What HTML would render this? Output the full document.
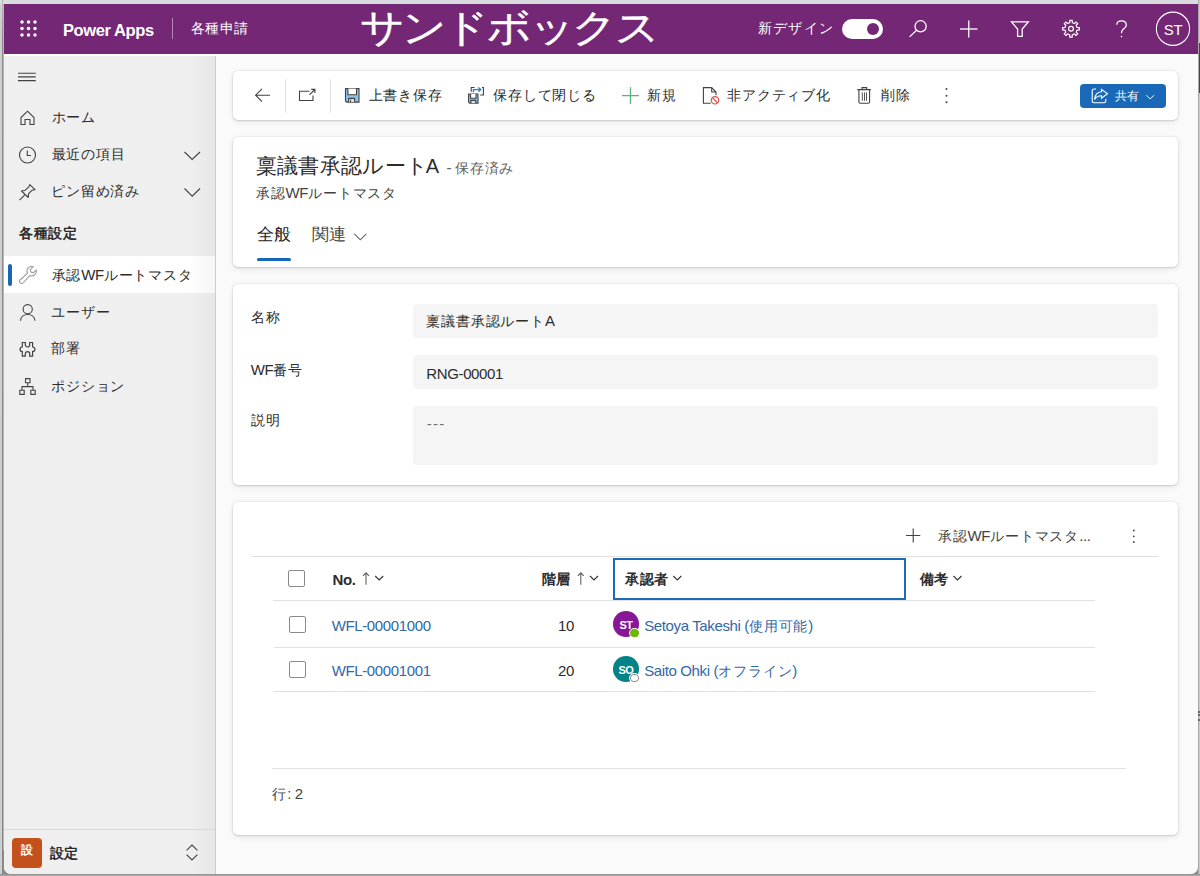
<!DOCTYPE html>
<html lang="ja">
<head>
<meta charset="utf-8">
<style>
*{box-sizing:border-box;margin:0;padding:0}
html,body{width:1200px;height:876px;overflow:hidden;background:#cfcfcf;font-family:"Liberation Sans",sans-serif;color:#2c2c2c}
.a{position:absolute;white-space:nowrap;line-height:1}
svg{position:absolute;overflow:visible}
#ftop{position:absolute;left:0;top:0;width:1200px;height:4px;background:#dadbdf}
#fl2{position:absolute;left:2px;top:0;width:1px;height:876px;background:linear-gradient(#b5b5b5 0,#b5b5b5 4px,#8a8a8a 40px,#858585 100%)}
#fl3{position:absolute;left:3px;top:4px;width:1px;height:872px;background:#b8b8b8}
#fr1{position:absolute;left:1198px;top:0;width:1px;height:876px;background:#a8a8a8}
#fr2{position:absolute;left:1199px;top:0;width:1px;height:876px;background:#cbcbcb}
#fb1{position:absolute;left:0;top:874px;width:1200px;height:1px;background:#969696}
#fb2{position:absolute;left:0;top:875px;width:1200px;height:1px;background:#a8a8a8}
#wbg{position:absolute;left:3px;top:850px;width:1195px;height:24px;background:#8a8a8a}
#win{position:absolute;left:4px;top:4px;width:1194px;height:870px;background:#fafafa;border-radius:0 0 7px 7px}
#hdr{position:absolute;left:4px;top:4px;width:1194px;height:50.3px;background:#742774}
#side{position:absolute;left:4px;top:56px;width:212px;height:818px;background:linear-gradient(to right,#efefef 0,#efefef 186px,#e6e6e6 211px);border-right:1px solid #cdcdcd;border-radius:0 0 0 7px}
#hwl{position:absolute;left:4px;top:54.3px;width:1194px;height:1.7px;background:#fff}
.card{position:absolute;left:232.5px;width:945px;background:#fff;border-radius:5px;box-shadow:0 0 2px rgba(0,0,0,.12),0 1px 2px rgba(0,0,0,.12),0 2px 7px rgba(0,0,0,.07)}
.w{color:#fff}
.sb{top:7.6px;font-size:39px;transform:scaleX(1.12);transform-origin:0 0;-webkit-text-stroke:.35px #fff}
.dot{position:absolute;width:3.4px;height:3.4px;border-radius:50%;background:#fff}
.f14{font-size:14.2px;letter-spacing:.85px}
.L{font-size:15px;letter-spacing:-.37px}
.b{font-weight:bold}
.g{color:#616161}
.lk{color:#3268a6}
.inp{position:absolute;left:412.5px;width:745px;background:#f5f5f5;border-radius:4px}
.cb{position:absolute;width:17px;height:17px;border:1px solid #8a8a8a;border-radius:2px;background:#fff}
.hl{position:absolute;height:1px;background:#e0e0e0}
</style>
</head>
<body>
<div id="ftop"></div>
<div id="fl2"></div><div id="fl3"></div><div id="fr1"></div><div id="fr2"></div><div id="fb1"></div><div id="fb2"></div>
<div style="position:absolute;left:1199px;top:43px;width:1px;height:50px;background:#742774"></div>
<div id="wbg"></div>
<div style="position:absolute;left:1198px;top:711px;width:2px;height:2px;background:#6a6a6a"></div><div style="position:absolute;left:1198px;top:714px;width:2px;height:1.5px;background:#6a6a6a"></div><div style="position:absolute;left:1198px;top:719px;width:2px;height:2px;background:#6a6a6a"></div>
<div id="win"></div>
<div id="hdr"></div><div id="hwl"></div>

<!-- ========== header content ========== -->
<svg style="left:0;top:0" width="60" height="60" fill="#fff"><circle cx="22" cy="22" r="1.75"/><circle cx="28.5" cy="22" r="1.75"/><circle cx="35" cy="22" r="1.75"/><circle cx="22" cy="28.5" r="1.75"/><circle cx="28.5" cy="28.5" r="1.75"/><circle cx="35" cy="28.5" r="1.75"/><circle cx="22" cy="35" r="1.75"/><circle cx="28.5" cy="35" r="1.75"/><circle cx="35" cy="35" r="1.75"/></svg>
<div class="a w b" style="left:63px;top:22.3px;font-size:16.5px;letter-spacing:-.4px">Power Apps</div>
<div style="position:absolute;left:171.5px;top:18px;width:1px;height:21px;background:rgba(255,255,255,.45)"></div>
<div class="a w" style="left:190.5px;top:21.3px;font-size:14px;letter-spacing:.6px">各種申請</div>
<div class="a w sb" style="left:359.72px">サ</div><div class="a w sb" style="left:401.79px">ン</div><div class="a w sb" style="left:443.52px">ド</div><div class="a w sb" style="left:486.62px">ボ</div><div class="a w sb" style="left:529.86px">ッ</div><div class="a w sb" style="left:572.43px">ク</div><div class="a w sb" style="left:614.88px">ス</div>
<div class="a w f14" style="left:758px;top:21px;letter-spacing:1.2px">新デザイン</div>
<div style="position:absolute;left:842px;top:19px;width:41px;height:20px;border-radius:10px;background:#fff"></div>
<div style="position:absolute;left:867px;top:23px;width:12px;height:12px;border-radius:50%;background:#742774"></div>
<svg style="left:0;top:0" width="1200" height="60" fill="none" stroke="#fff" stroke-width="1.3">
  <circle cx="920.6" cy="26.3" r="5.6"/>
  <line x1="916.6" y1="30.3" x2="909.6" y2="36.9"/>
  <line x1="960" y1="29" x2="977.5" y2="29"/>
  <line x1="968.75" y1="20.6" x2="968.75" y2="37.5"/>
  <path d="M1011.5 21.8 H1028.3 L1022.2 29 V36.4 H1017.6 V29 Z"/>
  <path stroke-width="1.2" d="M1077.06 27.46 L1079.32 27.58 L1079.32 29.92 L1077.06 30.04 L1076.20 32.13 L1077.71 33.81 L1076.06 35.46 L1074.38 33.95 L1072.29 34.81 L1072.17 37.07 L1069.83 37.07 L1069.71 34.81 L1067.62 33.95 L1065.94 35.46 L1064.29 33.81 L1065.80 32.13 L1064.94 30.04 L1062.68 29.92 L1062.68 27.58 L1064.94 27.46 L1065.80 25.37 L1064.29 23.69 L1065.94 22.04 L1067.62 23.55 L1069.71 22.69 L1069.83 20.43 L1072.17 20.43 L1072.29 22.69 L1074.38 23.55 L1076.06 22.04 L1077.71 23.69 L1076.20 25.37Z"/>
  <circle cx="1071" cy="28.75" r="2.4" stroke-width="1.2"/>
  <path stroke-width="1.3" d="M1116.8 24.8 C1116.8 22.3 1118.7 20.9 1121.5 20.9 C1124.4 20.9 1126.3 22.7 1126.3 25.1 C1126.3 27.6 1124.3 28.5 1122.8 29.7 C1121.7 30.6 1121.5 31.5 1121.5 33.3"/>
  <circle cx="1121.5" cy="36.6" r="0.8" fill="#fff" stroke="none"/>
  <circle cx="1173" cy="28.75" r="16.6" stroke-width="1.1"/>
</svg>
<div class="a w" style="left:1163.7px;top:21.8px;font-size:15px;letter-spacing:-.3px">ST</div>

<!-- ========== sidebar ========== -->
<div id="side"></div>
<div style="position:absolute;left:4px;top:255.5px;width:211px;height:37.5px;background:linear-gradient(to right,#fff 0,#fff 186px,#f5f5f5 211px)"></div>
<div style="position:absolute;left:8px;top:264px;width:4px;height:22px;border-radius:2px;background:#1767b9"></div>
<div class="hl" style="left:4px;top:829px;width:211px;background:#d9d9d9"></div>
<div class="a f14" style="left:51.5px;top:109.8px">ホーム</div>
<div class="a f14" style="left:51.5px;top:147.3px">最近の項目</div>
<div class="a f14" style="left:51px;top:184px">ピン留め済み</div>
<div class="a f14 b" style="left:19px;top:225.8px;letter-spacing:.7px">各種設定</div>
<div class="a f14" style="left:51.5px;top:267px">承認<span class="L">WF</span>ルートマスタ</div>
<div class="a f14" style="left:51px;top:304.9px">ユーザー</div>
<div class="a f14" style="left:51px;top:341.3px">部署</div>
<div class="a f14" style="left:51px;top:378.9px">ポジション</div>
<div style="position:absolute;left:12px;top:838px;width:30px;height:30px;border-radius:4px;background:#c4501c"></div>
<div class="a w b" style="left:21px;top:845px;font-size:11.5px">設</div>
<div class="a f14 b" style="left:50px;top:846px;letter-spacing:0">設定</div>
<svg style="left:0;top:0" width="220" height="876" fill="none" stroke="#424242" stroke-width="1.1">
  <path d="M18 73.2H35.8 M18 76.9H35.8 M18 80.6H35.8"/>
  <path d="M21 124.5V117.6L27.5 111.2L34 117.6V124.5H30V119.5H25V124.5Z"/>
  <circle cx="27.5" cy="155" r="8"/>
  <path d="M27.3 150.5V155.5H31"/>
  <path d="M184.5 152L192.2 159.5L200 152 M184.5 188.5L192.2 196.2L200 188.5"/>
  <path d="M19.5 200.2L24.6 195.1"/><path stroke-linejoin="round" d="M29.8 184.6L35 189.6L32 190.3L28.6 193.6L28.2 197.5L21.5 191L25.3 190.2L28.9 186.8Z"/>
  <path stroke="#9a9a9a" transform="translate(0 .8)" d="M19.8 281.5C19.2 280.8 19.3 279.8 20 279.2L27.4 272.5C26.6 270.6 27 268.3 28.6 266.9C29.9 265.8 31.6 265.5 33.1 266L30.2 268.9L31 271.2L33.3 272L36.2 269.1C36.7 270.6 36.4 272.4 35.2 273.6C33.8 275.1 31.6 275.6 29.7 274.8L23 282.2C22.4 282.9 21.3 282.9 20.7 282.3Z"/>
  <circle cx="27.7" cy="309.2" r="4.6"/>
  <path d="M20.5 320.8C20.8 317 23.8 314.5 27.7 314.5C31.6 314.5 34.6 317 35 320.8"/>
  <path stroke-width="1.2" d="M22.3 342.5H25.3V344.8A2.2 2.2 0 0 0 29.7 344.8V342.5H32.6V347A2.3 2.3 0 0 1 32.6 351.6V356.1H29.7V353.8A2.2 2.2 0 0 0 25.3 353.8V356.1H22.3V351.6A2.3 2.3 0 0 1 22.3 347Z"/>
  <path d="M25.5 378.6H30V382.8H25.5Z M19.8 390.2H24.2V394.4H19.8Z M30.8 390.2H35.2V394.4H30.8Z M27.75 382.8V386.6 M22 390.2V386.6H33V390.2"/>
  <path d="M186.6 850.4L192 845L197.4 850.4 M186.6 854.6L192 860L197.4 854.6"/>
</svg>

<!-- ========== cards ========== -->
<div class="card" style="top:71px;height:49px"></div>
<div class="card" style="top:137px;height:130px"></div>
<div class="card" style="top:284px;height:201px"></div>
<div class="card" style="top:501.6px;height:333.4px"></div>

<!-- command bar -->
<div class="hl" style="left:285px;top:79px;width:1px;height:33.5px;background:#e0e0e0"></div>
<div class="hl" style="left:330px;top:79px;width:1px;height:33.5px;background:#e0e0e0"></div>
<div class="a f14" style="left:368.5px;top:88.3px">上書き保存</div>
<div class="a f14" style="left:493px;top:88px">保存して閉じる</div>
<div class="a f14" style="left:647px;top:87.7px">新規</div>
<div class="a f14" style="left:727px;top:87.9px">非アクティブ化</div>
<div class="a f14" style="left:881px;top:87.8px">削除</div>
<div style="position:absolute;left:1079.5px;top:83.5px;width:86.5px;height:24.5px;border-radius:4px;background:#1a69b8"></div>
<div class="a w" style="left:1114.6px;top:90px;font-size:12.2px;letter-spacing:.3px">共有</div>
<svg style="left:0;top:0" width="1200" height="130" fill="none" stroke="#424242" stroke-width="1.1">
  <path d="M262 88.8L255.6 95.2L262 101.6 M255.6 95.2H270"/>
  <path d="M309.5 91.2H299.5V100.5H313V95.5 M309.5 94.8L314.8 89.5 M311.2 89.4H314.9V93.1"/>
  <path fill="#8cc4f0" d="M345.5 88.6H359V102.1H346.6L345.5 101Z"/>
  <path fill="#fff" d="M347.9 88.6V94.7H356.5V88.6"/>
  <path fill="#e2e2e2" d="M348.6 102.1V98.4H354.6V102.1"/>
  <path stroke-width="1" d="M350.6 99.6V102"/>
  <path fill="#8cc4f0" d="M468.6 94H478V103.1H469.6L468.6 102.1Z"/>
  <path fill="#fff" d="M470.6 94V98.2H476V94"/>
  <path fill="#e2e2e2" d="M470.9 103.1V100.4H475.7V103.1"/>
  <path d="M471.2 91.8V87.5H474.6 M482 87.5H483.4V95H480.2"/>
  <path stroke="#2f7bd1" stroke-width="1.3" d="M473.4 92.2V89.6H480.6 M478.4 87.4L480.8 89.6L478.4 91.8"/>
  <path stroke="#56b476" stroke-width="1.3" d="M622 95.6H639 M630.5 87.3V104"/>
  <path d="M711.7 87.6H703.4V103.3H710.8 M711.7 87.6L716 92V95.2 M711.7 87.6V92H716"/>
  <circle cx="715" cy="100.3" r="3.7" fill="#fff" stroke="#e64a4a" stroke-width="1.2"/>
  <path stroke="#e64a4a" stroke-width="1.3" d="M712.6 97.9L717.4 102.7"/>
  <path d="M857.3 89.6H870.8 M862 89.6V87.6H866.7V89.6 M858.9 89.6V102.1Q858.9 103.2 860.1 103.2H868.3Q869.6 103.2 869.6 102.1V89.6"/><path stroke-width=".9" d="M862.3 92.4V100.8 M864.5 92.4V100.8 M866.5 92.4V100.8"/>
  <circle cx="946.5" cy="89" r="1" fill="#424242" stroke="none"/>
  <circle cx="946.5" cy="95.7" r="1" fill="#424242" stroke="none"/>
  <circle cx="946.5" cy="102.3" r="1" fill="#424242" stroke="none"/>
  <path stroke="#fff" d="M1096 89H1094Q1092.2 89 1092.2 90.8V101Q1092.2 102.7 1094 102.7H1104Q1105.8 102.7 1105.8 101V99 M1101.5 89.4L1107.5 93.8L1101.5 98.2V95.8C1098 95.8 1096 97 1094.5 99.5C1095 95 1097.5 92 1101.5 91.8Z"/>
  <path stroke="#fff" stroke-width=".95" d="M1146.4 95.2L1150.2 99L1154 95.2"/>
</svg>

<!-- header card -->
<div class="a" style="left:255.5px;top:154.5px;font-size:21px;letter-spacing:.4px">稟議書承認ルート<span style="margin-left:-3px;font-size:20px">A</span></div>
<div class="a f14 g" style="left:446.5px;top:160.3px"><span class="L">- </span>保存済み</div>
<div class="a f14" style="left:255.8px;top:184.5px;color:#424242">承認<span class="L">WF</span>ルートマスタ</div>
<div class="a" style="left:257px;top:226.5px;font-size:16.6px;color:#242424">全般</div>
<div class="a" style="left:312px;top:226.5px;font-size:16.6px;color:#424242">関連</div>
<div style="position:absolute;left:256.5px;top:258px;width:34px;height:3px;border-radius:1.5px;background:#1767b9"></div>
<svg style="left:0;top:0" width="400" height="260" fill="none" stroke="#616161" stroke-width="1.1">
  <path d="M354.3 233.8L360.3 239.8L366.3 233.8"/>
</svg>

<!-- fields card -->
<div class="a f14" style="left:251.2px;top:309.9px">名称</div>
<div class="a f14" style="left:250.8px;top:361.6px"><span class="L">WF</span>番号</div>
<div class="a f14" style="left:251px;top:412.5px">説明</div>
<div class="inp" style="top:304px;height:34px"></div>
<div class="inp" style="top:355px;height:34px"></div>
<div class="inp" style="top:406px;height:59px"></div>
<div class="a f14" style="left:426.2px;top:312.9px">稟議書承認ルート<span class="L">A</span></div>
<div class="a L" style="left:426.3px;top:365.9px">RNG-00001</div>
<div class="a L" style="left:426.8px;top:416px;color:#707070;letter-spacing:1.2px">---</div>

<!-- grid card -->
<div class="a f14" style="left:937.8px;top:527.6px;color:#424242">承認<span class="L">WF</span>ルートマスタ<span class="L">...</span></div>
<div class="hl" style="left:252px;top:555.5px;width:906px"></div>
<div class="cb" style="left:288px;top:569.5px"></div>
<div class="a L b" style="left:332.5px;top:572.3px">No.</div>
<div class="a f14 b" style="left:541.7px;top:572.1px;letter-spacing:0">階層</div>
<div style="position:absolute;left:612.5px;top:557.5px;width:293.5px;height:42.5px;border:2px solid #1d6ab6"></div>
<div class="a f14 b" style="left:625px;top:572.1px;letter-spacing:.5px">承認者</div>
<div class="a f14 b" style="left:920px;top:572.1px;letter-spacing:0">備考</div>
<div class="hl" style="left:272.5px;top:600px;width:822.5px"></div>
<div class="cb" style="left:288.5px;top:615.5px"></div>
<div class="a L lk" style="left:331.7px;top:618px">WFL-00001000</div>
<div class="a L" style="left:558px;top:618px">10</div>
<div style="position:absolute;left:613.2px;top:611.2px;width:25.6px;height:25.6px;border-radius:50%;background:#881798"></div>
<div class="a w b" style="left:619.6px;top:620px;font-size:11px;letter-spacing:-.6px">ST</div>
<div style="position:absolute;left:629px;top:627.5px;width:10.5px;height:10.5px;border-radius:50%;background:#6bb700;border:1.5px solid #fff"></div>
<div class="a L lk" style="left:644.2px;top:617.8px">Setoya Takeshi (<span class="f14">使用可能</span>)</div>
<div class="hl" style="left:274px;top:646.5px;width:821px"></div>
<div class="cb" style="left:288.5px;top:660.5px"></div>
<div class="a L lk" style="left:331.7px;top:663px">WFL-00001001</div>
<div class="a L" style="left:558px;top:663px">20</div>
<div style="position:absolute;left:613.2px;top:656.2px;width:25.6px;height:25.6px;border-radius:50%;background:#038387"></div>
<div class="a w b" style="left:618.6px;top:665px;font-size:11px;letter-spacing:-.6px">SO</div>
<div style="position:absolute;left:629px;top:672.5px;width:10.5px;height:10.5px;border-radius:50%;background:#fff;border:1.5px solid #fff;box-shadow:inset 0 0 0 1px #8a8a8a"></div>
<div class="a L lk" style="left:644.2px;top:662.8px">Saito Ohki (<span class="f14">オフライン</span>)</div>
<div class="hl" style="left:274px;top:691px;width:821px"></div>
<div class="hl" style="left:272px;top:768px;width:854px"></div>
<div class="a f14" style="left:272.3px;top:786.1px;color:#424242">行<span class="L">: 2</span></div>
<svg style="left:0;top:0" width="1200" height="700" fill="none" stroke="#424242" stroke-width="1.1">
  <path d="M906 535.5H920.3 M913.2 528.5V542.5"/>
  <circle cx="1133.8" cy="530.5" r="0.9" fill="#424242" stroke="none"/>
  <circle cx="1133.8" cy="536.3" r="0.9" fill="#424242" stroke="none"/>
  <circle cx="1133.8" cy="542" r="0.9" fill="#424242" stroke="none"/>
  <path stroke="#616161" d="M366 584.7V572.9 M363 575.8L366 572.8L369 575.8"/>
  <path stroke="#333" d="M375.2 576L379.2 580L383.2 576"/>
  <path stroke="#616161" d="M580.8 584.7V572.9 M577.8 575.8L580.8 572.8L583.8 575.8"/>
  <path stroke="#333" d="M590 576L594 580L598 576"/>
  <path stroke="#333" d="M673.3 576L677.3 580L681.3 576"/>
  <path stroke="#333" d="M953.5 576L957.5 580L961.5 576"/>
</svg>

</body>
</html>
